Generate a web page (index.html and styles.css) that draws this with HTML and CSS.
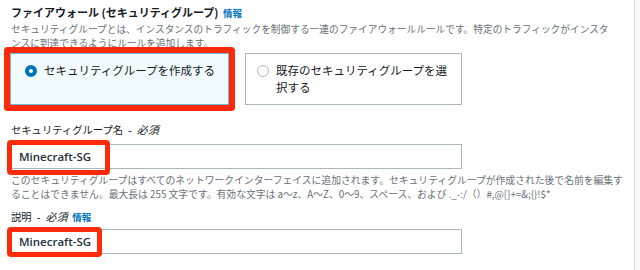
FILE: index.html
```html
<!DOCTYPE html>
<html lang="ja">
<head>
    <meta charset="UTF-8">
    <meta name="viewport" content="width=device-width, initial-scale=1.0">
    <title>ファイアウォール (セキュリティグループ)</title>
    <link rel="stylesheet" href="styles.css">
</head>
<body>
    <div class="page">
        <main class="content">
            <h3 class="title">ファイアウォール (セキュリティグループ) <a class="info">情報</a></h3>
            <p class="desc">セキュリティグループとは、インスタンスのトラフィックを制御する一連のファイアウォールルールです。特定のトラフィックがインスタンスに到達できるようにルールを追加します。</p>

            <div class="tiles">
                <label class="tile selected">
                    <span class="radio"></span>
                    <span class="tile-text">セキュリティグループを作成する</span>
                </label>
                <label class="tile">
                    <span class="radio"></span>
                    <span class="tile-text">既存のセキュリティグループを選択する</span>
                </label>
            </div>

            <div class="field field-name">
                <div class="label">セキュリティグループ名<span class="dash"> - </span><i>必須</i></div>
                <div class="input-wrap">
                    <div class="input">Minecraft-SG</div>
                    <span class="mark mark-name"></span>
                </div>
                <p class="help">このセキュリティグループはすべてのネットワークインターフェイスに追加されます。セキュリティグループが作成された後で名前を編集することはできません。最大長は 255 文字です。有効な文字は a～z、A～Z、0～9、スペース、および ._-:/（）#,@[]+=&amp;;{}!$*</p>
            </div>

            <div class="field field-desc">
                <div class="label">説明<span class="dash"> - </span><i>必須</i> <a class="info">情報</a></div>
                <div class="input-wrap">
                    <div class="input">Minecraft-SG</div>
                    <span class="mark mark-desc"></span>
                </div>
            </div>
        </main>
        <div class="gutter"></div>
    </div>
</body>
</html>
```

FILE: styles.css
```css
:root {
    --text: #16191f;
    --muted: #687078;
    --link: #0073bb;
    --border: #aab7b8;
    --mark: #ff2a0a;
}
* { box-sizing: border-box; }
body {
    margin: 0;
    background: #ffffff;
    color: var(--text);
    font-family: "Noto Sans CJK JP", "Noto Sans", sans-serif;
    overflow: hidden;
}
.page {
    display: flex;
    width: 640px;
    height: 270px;
}
.content {
    width: 635px;
    padding: 4px 10px 0 10px;
    border-right: 1px solid #d5dbdb;
}
.gutter {
    flex: 1;
    background: #f7f8f8;
}
.title {
    margin: 0 0 0 1px;
    font-size: 11px;
    line-height: 17px;
    font-weight: 700;
}
.info {
    color: var(--link);
    font-size: 9.5px;
    font-weight: 700;
    margin-left: 2px;
}
.desc {
    margin: 1px 0 0 1px;
    width: 606px;
    font-size: 9.7px;
    line-height: 13.5px;
    color: var(--muted);
    height: 27px;
    overflow: hidden;
}

/* radio tiles */
.tiles {
    display: grid;
    grid-template-columns: 219px 217px;
    column-gap: 16px;
    margin-top: 3px;
}
.tile {
    display: flex;
    align-items: flex-start;
    gap: 7px;
    padding: 8px 12px 8px 14px;
    border: 1px solid var(--border);
    font-size: 11.5px;
    line-height: 17px;
    min-height: 51px;
}
.tile.selected {
    background: #f1faff;
    border-color: #6cbcdc;
    box-shadow: 0 0 0 6px var(--mark);
    border-radius: 1px;
}
.tile + .tile { padding-left: 11px; }
.radio {
    flex: none;
    width: 12px;
    height: 12px;
    margin-top: 2.5px;
    border-radius: 50%;
    border: 1.3px solid #aab7b8;
    background: #fff;
}
.selected .radio {
    border: 4px solid var(--link);
}

/* form fields */
.label {
    font-size: 10.3px;
    line-height: 14px;
    margin-left: 1px;
}
.label .dash {
    font-family: "Liberation Sans", sans-serif;
    font-size: 11px;
    padding: 0 2px;
}
.label i {
    font-style: italic;
    font-size: 10.8px;
    letter-spacing: 0.5px;
}
.field-name { margin-top: 17px; }
.field-name .label { margin-bottom: 7px; }
.field-desc { margin-top: 8px; }
.field-desc .label { margin-bottom: 5px; }
.field-desc .info { font-size: 9.5px; }
.input-wrap {
    position: relative;
    width: 452px;
}
.input {
    height: 25px;
    border: 1px solid var(--border);
    padding: 0 8px;
    font-family: "Open Sans", "Noto Sans CJK JP", sans-serif;
    font-size: 11.5px;
    font-weight: 600;
    line-height: 23px;
    color: #232f3e;
}
.help {
    margin: 5px 0 0 1px;
    width: 612px;
    font-size: 9.8px;
    line-height: 13.5px;
    color: var(--muted);
}

/* red annotation boxes laid over the inputs */
.mark {
    position: absolute;
    border: 5px solid var(--mark);
    border-radius: 4px;
}
.mark-name { left: -3px; top: -4px; width: 103px; height: 35px; }
.mark-desc { left: -3px; top: -2px; width: 95px; height: 30px; }
```
